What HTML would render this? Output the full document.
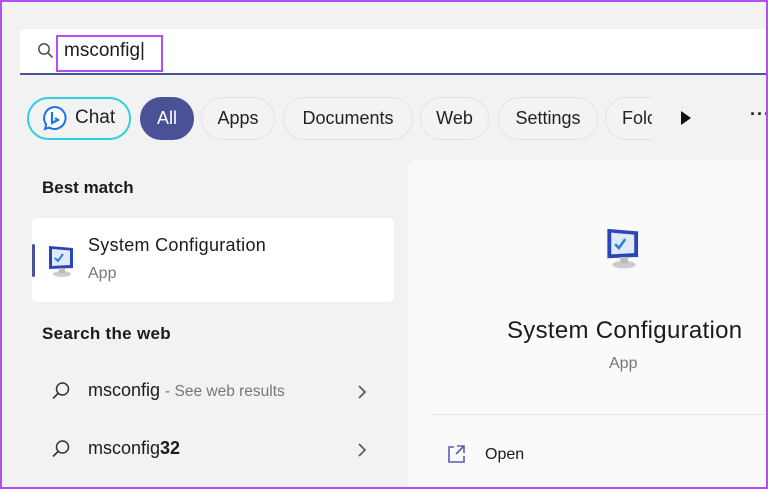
<!DOCTYPE html>
<html style="width:768px;height:489px;overflow:hidden"><head><style>
*{margin:0;padding:0;box-sizing:border-box}
body{width:768px;height:489px;overflow:hidden;background:#f2f2f2;font-family:"Liberation Sans",sans-serif;color:#1b1b1b;position:relative}
.frame{position:absolute;left:0;top:0;width:768px;height:489px;border:2px solid #b050f0;pointer-events:none;z-index:9}
.abs{position:absolute}
.search{left:20px;top:29px;width:760px;height:46px;background:#fff;border-radius:4px 0 0 0;border-bottom:2px solid #4a5596}
.hl{left:56px;top:35px;width:107px;height:37px;border:2px solid #b050f0}
.chip{position:absolute;top:97px;height:43px;border:1.5px solid #e2e2e2;border-radius:22px;font-size:18px;line-height:40px;text-align:center;color:#222;background:#f3f3f3}
.t{position:absolute;white-space:nowrap}
</style></head><body>
<div class="abs search"></div>
<svg class="abs" style="left:37px;top:42px" width="18" height="18" viewBox="0 0 18 18"><circle cx="7" cy="7" r="5.2" fill="none" stroke="#444" stroke-width="1.4"/><line x1="11" y1="11" x2="15.5" y2="15.5" stroke="#444" stroke-width="1.5"/></svg>
<div class="t" style="left:64px;top:40px;font-size:19px">msconfig<span style="font-weight:100">|</span></div>
<div class="abs hl"></div>

<div class="chip" style="left:27px;width:104px;border:2.5px solid #2ed0e0;text-align:left;padding-left:46px;line-height:38px;font-size:19px">Chat</div>
<svg class="abs" style="left:42px;top:105px" width="26" height="26" viewBox="0 0 26 26"><path d="M13 2a11 11 0 1 1-6 20.5L3 24l1.2-4.5A11 11 0 0 1 13 2z" fill="#fff" stroke="#1a73e8" stroke-width="2"/><path d="M10 7v11l6-3-3-2" fill="none" stroke="#1a73e8" stroke-width="2.2"/></svg>
<div class="chip" style="left:140px;width:54px;background:#4a5196;border-color:#4a5196;color:#fff">All</div>
<div class="chip" style="left:201px;width:74px">Apps</div>
<div class="chip" style="left:283px;width:130px">Documents</div>
<div class="chip" style="left:420px;width:69px">Web</div>
<div class="chip" style="left:498px;width:100px">Settings</div>
<div class="chip" style="left:605px;width:60px;text-align:left;padding-left:16px;border-right:none;border-radius:22px 0 0 22px;overflow:hidden">Folc</div>
<div class="abs" style="left:652px;top:95px;width:20px;height:48px;background:#f2f2f2"></div>
<svg class="abs" style="left:680px;top:110px" width="12" height="16"><path d="M1 1l10 7-10 7z" fill="#111"/></svg>
<div class="t" style="left:750px;top:104px;font-size:18px;font-weight:bold;letter-spacing:1px">···</div>

<div class="t" style="left:42px;top:178px;font-size:17px;font-weight:bold">Best match</div>
<div class="abs" style="left:32px;top:218px;width:362px;height:84px;background:#fff;border-radius:5px"></div>
<div class="abs" style="left:32px;top:244px;width:3px;height:33px;background:#4a5196;border-radius:2px"></div>
<svg class="abs" style="left:46px;top:243px" width="32" height="36" viewBox="0 0 32 36"><path d="M3 3l24 2v20l-24 1z" fill="#2a45b8"/><path d="M6 6l18 1.5v14.5l-18 1z" fill="#dfe9f7"/><path d="M9 15l3 3 5-7" stroke="#2a7fd8" stroke-width="2" fill="none"/><ellipse cx="16" cy="31" rx="9" ry="3" fill="#ccc"/><rect x="13" y="25" width="6" height="5" fill="#bbb"/></svg>
<div class="t" style="left:88px;top:235px;font-size:18px;letter-spacing:.3px">System Configuration</div>
<div class="t" style="left:88px;top:265px;font-size:16px;color:#777">App</div>

<div class="t" style="left:42px;top:324px;font-size:17px;font-weight:bold;letter-spacing:.3px">Search the web</div>
<svg class="abs" style="left:51px;top:381px" width="20" height="20" viewBox="0 0 20 20"><circle cx="11.5" cy="8" r="6" fill="none" stroke="#333" stroke-width="1.5"/><line x1="7" y1="12.5" x2="2" y2="17.5" stroke="#333" stroke-width="1.6"/></svg>
<div class="t" style="left:88px;top:380px;font-size:18px">msconfig <span style="font-size:15.5px;color:#777">- See web results</span></div>
<svg class="abs" style="left:357px;top:385px" width="10" height="14"><path d="M2 1l6 6-6 6" fill="none" stroke="#555" stroke-width="1.6"/></svg>
<svg class="abs" style="left:51px;top:439px" width="20" height="20" viewBox="0 0 20 20"><circle cx="11.5" cy="8" r="6" fill="none" stroke="#333" stroke-width="1.5"/><line x1="7" y1="12.5" x2="2" y2="17.5" stroke="#333" stroke-width="1.6"/></svg>
<div class="t" style="left:88px;top:438px;font-size:18px">msconfig<b>32</b></div>
<svg class="abs" style="left:357px;top:443px" width="10" height="14"><path d="M2 1l6 6-6 6" fill="none" stroke="#555" stroke-width="1.6"/></svg>

<div class="abs" style="left:408px;top:160px;width:360px;height:329px;background:#fafafa;border-radius:8px 0 0 0"></div>
<svg class="abs" style="left:603px;top:225px" width="42" height="46" viewBox="0 0 32 36"><path d="M3 3l24 2v20l-24 1z" fill="#2a45b8"/><path d="M6 6l18 1.5v14.5l-18 1z" fill="#dfe9f7"/><path d="M9 15l3 3 5-7" stroke="#2a7fd8" stroke-width="2" fill="none"/><ellipse cx="16" cy="31" rx="9" ry="3" fill="#ccc"/><rect x="13" y="25" width="6" height="5" fill="#bbb"/></svg>
<div class="t" style="left:507px;top:317px;font-size:24px;letter-spacing:.3px">System Configuration</div>
<div class="t" style="left:609px;top:355px;font-size:16px;color:#777">App</div>
<div class="abs" style="left:430px;top:414px;width:340px;height:1px;background:#e6e6e6"></div>
<svg class="abs" style="left:446px;top:445px" width="20" height="19" viewBox="0 0 20 19"><path d="M8 2H3v15h15v-6" fill="none" stroke="#5560b0" stroke-width="1.6"/><path d="M11 1h7v7M18 1l-8 8" fill="none" stroke="#5560b0" stroke-width="1.6"/></svg>
<div class="t" style="left:485px;top:446px;font-size:16px">Open</div>
<div class="frame"></div>
</body></html>
